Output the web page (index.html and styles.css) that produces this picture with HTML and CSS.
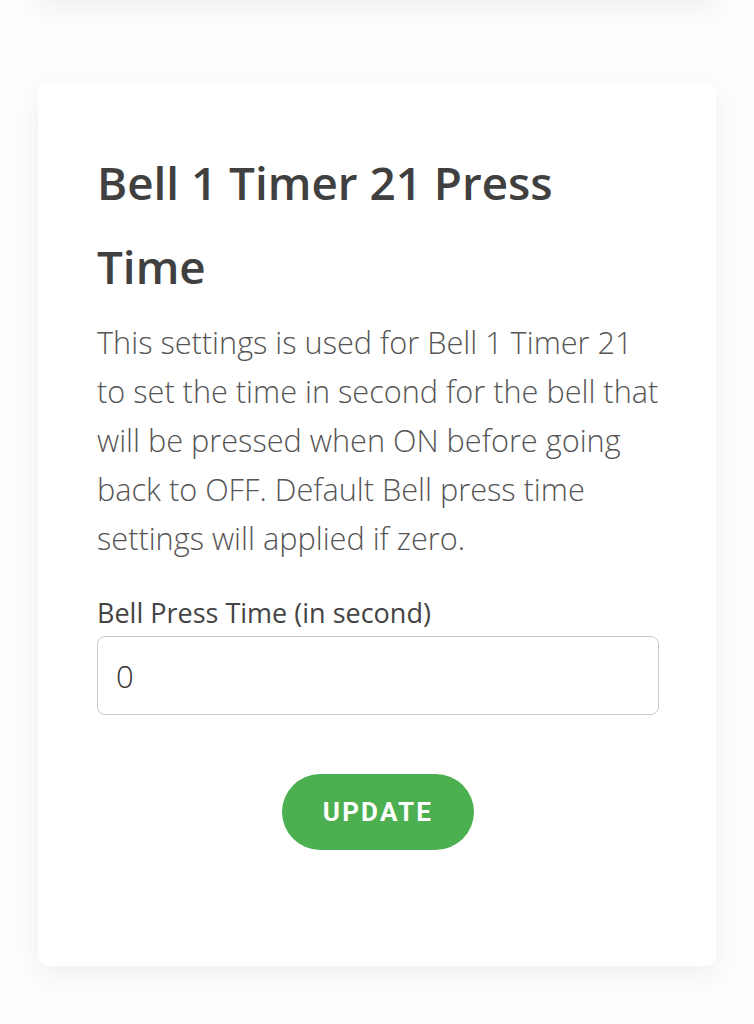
FILE: index.html
```html
<!DOCTYPE html>
<html>
<head>
<meta charset="utf-8">
<link rel="stylesheet" href="styles.css">
</head>
<body>
<div class="page">
  <div class="card card-edge"></div>
  <div class="card">
    <h1 class="title">Bell 1 Timer 21 Press Time</h1>
    <p class="desc">This settings is used for Bell 1 Timer 21 to set the time in second for the bell that will be pressed when ON before going back to OFF. Default Bell press time settings will applied if zero.</p>
    <label class="label" for="t">Bell Press Time (in second)</label>
    <input class="input" id="t" type="text" value="0">
    <div class="actions">
      <button class="btn">UPDATE</button>
    </div>
  </div>
  <div class="card card-edge"></div>
</div>
</body>
</html>
```
FILE: styles.css
```css
html, body {
  margin: 0;
  padding: 0;
  background: #fdfdfd;
  height: 100%;
  overflow: hidden;
}
.page {
  display: flex;
  flex-direction: column;
  gap: 83px;
  padding: 0 38px;
  margin-top: -300px;
}
.card {
  background: #fff;
  border-radius: 10px;
  box-shadow: 0 8px 28px rgba(0,0,0,0.06);
  padding: 57px 57px 116px 59px;
  display: flex;
  flex-direction: column;
  font-family: "Open Sans", sans-serif;
}
.card-edge {
  height: 300px;
  padding: 0;
  flex: none;
}
.title {
  margin: 0;
  font-size: 45.8px;
  font-weight: 600;
  line-height: 84px;
  color: #404040;
}
.desc {
  margin: 10px -6px 0 0;
  font-size: 30.7px;
  font-weight: 300;
  line-height: 49px;
  color: #555;
}
.label {
  margin-top: 32px;
  font-size: 27px;
  font-weight: 400;
  line-height: 36px;
  color: #444;
}
.input {
  margin-top: 5px;
  height: 79px;
  box-sizing: border-box;
  border: 1.5px solid #c8c8c8;
  border-radius: 8px;
  padding: 0 18px;
  font-family: "Open Sans", sans-serif;
  font-size: 31px;
  font-weight: 300;
  color: #333;
  background: #fff;
  outline: none;
}
.actions {
  display: flex;
  justify-content: center;
  margin-top: 59px;
}
.btn {
  width: 192px;
  height: 76px;
  border: none;
  border-radius: 38px;
  background: #4caf50;
  color: #fff;
  font-family: Roboto, "Open Sans", sans-serif;
  font-weight: 700;
  font-size: 26px;
  letter-spacing: 2.2px;
  cursor: pointer;
}
```
